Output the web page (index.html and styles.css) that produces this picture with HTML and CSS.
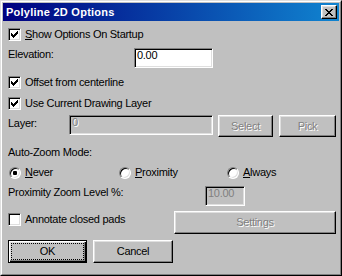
FILE: index.html
```html
<!DOCTYPE html>
<html>
<head>
<meta charset="utf-8">
<link rel="stylesheet" href="styles.css">
</head>
<body>
<div class="window">
  <div class="frame">
    <div class="titlebar">
      <span class="title">Polyline 2D Options</span>
      <span class="close">
        <svg width="8" height="7" viewBox="0 0 8 7" shape-rendering="crispEdges">
          <path d="M0 0h2v1h-2zM6 0h2v1h-2zM1 1h2v1h-2zM5 1h2v1h-2zM2 2h4v1h-4zM3 3h2v1h-2zM2 4h4v1h-4zM1 5h2v1h-2zM5 5h2v1h-2zM0 6h2v1h-2zM6 6h2v1h-2z" fill="#000"/>
        </svg>
      </span>
    </div>
    <div class="content">
      <div class="row row-check r-first">
        <span class="check"><svg width="7" height="7" viewBox="0 0 7 7" shape-rendering="crispEdges"><path d="M0 2H1V3H2V4H3V3H4V2H5V1H6V0H7V3H6V4H5V5H4V6H3V7H2V6H1V5H0Z" fill="#000"/></svg></span>
        <span class="lbl"><u>S</u>how Options On Startup</span>
      </div>
      <div class="row row-field r-elev">
        <span class="flabel w-elev">Elevation:</span>
        <span class="edit e-elev">0.00</span>
      </div>
      <div class="row row-check r-offset">
        <span class="check"><svg width="7" height="7" viewBox="0 0 7 7" shape-rendering="crispEdges"><path d="M0 2H1V3H2V4H3V3H4V2H5V1H6V0H7V3H6V4H5V5H4V6H3V7H2V6H1V5H0Z" fill="#000"/></svg></span>
        <span class="lbl">Offset from centerline</span>
      </div>
      <div class="row row-check r-layer-check">
        <span class="check"><svg width="7" height="7" viewBox="0 0 7 7" shape-rendering="crispEdges"><path d="M0 2H1V3H2V4H3V3H4V2H5V1H6V0H7V3H6V4H5V5H4V6H3V7H2V6H1V5H0Z" fill="#000"/></svg></span>
        <span class="lbl">Use Current Drawing Layer</span>
      </div>
      <div class="row row-field r-layer">
        <span class="flabel w-layer disabled-label">Layer:</span>
        <span class="edit edit-disabled e-layer"><span class="dis-text">0</span></span>
        <span class="btn b-select disabled">Select</span>
        <span class="btn b-pick disabled">Pick</span>
      </div>
      <div class="section-label">Auto-Zoom Mode:</div>
      <div class="row r-radios">
        <span class="ritem ri-never"><span class="radio"><span class="dot"></span></span><span class="rlbl"><u>N</u>ever</span></span>
        <span class="ritem ri-prox"><span class="radio"></span><span class="rlbl"><u>P</u>roximity</span></span>
        <span class="ritem ri-always"><span class="radio"></span><span class="rlbl"><u>A</u>lways</span></span>
      </div>
      <div class="row row-field r-prox">
        <span class="flabel w-prox">Proximity Zoom Level %:</span>
        <span class="edit edit-disabled e-prox"><span class="gray-text">10.00</span></span>
      </div>
      <div class="row r-annot">
        <span class="check"></span>
        <span class="lbl">Annotate closed pads</span>
        <span class="btn b-settings disabled">Settings</span>
      </div>
      <div class="row r-buttons">
        <span class="btn btn-default b-ok">OK</span>
        <span class="btn b-cancel">Cancel</span>
      </div>
    </div>
  </div>
</div>
</body>
</html>
```
FILE: styles.css
```css
body {
  margin: 0;
  font-family: "Liberation Sans", Arial, sans-serif;
  font-size: 11px;
  letter-spacing: -0.28px;
  color: #000;
  background: #c0c0c0;
}

.window {
  width: 342px;
  height: 276px;
  box-sizing: border-box;
  background: #c0c0c0;
  border: 1px solid;
  border-color: #dfdfdf #000 #000 #dfdfdf;
}

.frame {
  height: 100%;
  box-sizing: border-box;
  border: 1px solid;
  border-color: #fff #808080 #808080 #fff;
  padding: 1px;
}

.titlebar {
  height: 18px;
  display: flex;
  align-items: center;
  justify-content: space-between;
  padding: 0 2px 0 3px;
  background: linear-gradient(to right, #000080, #1084d0);
}

.title {
  color: #fff;
  font-weight: bold;
  letter-spacing: 0.25px;
  line-height: 18px;
}

.close {
  width: 16px;
  height: 14px;
  box-sizing: border-box;
  border: 1px solid;
  border-color: #fff #000 #000 #fff;
  box-shadow: inset -1px -1px #808080, inset 1px 1px #dfdfdf;
  background: #c0c0c0;
  display: flex;
  align-items: center;
  justify-content: center;
}

.close svg {
  display: block;
  margin: 0 0 0 0;
}

.content {
  display: flex;
  flex-direction: column;
  padding: 0 3px 0 5px;
}

.row {
  display: flex;
  align-items: center;
}

.row-check {
  height: 13px;
}

.r-first { margin-top: 7px; }
.r-elev { margin-top: 7px; height: 20px; align-items: flex-start; }
.r-offset { margin-top: 8px; }
.r-layer-check { margin-top: 8px; }
.r-layer { margin-top: 5px; height: 22px; align-items: flex-start; }
.r-radios { margin-top: 7px; height: 13px; }
.r-prox { margin-top: 7px; height: 20px; align-items: flex-start; }
.r-annot { margin-top: 5px; height: 23px; align-items: flex-start; }
.r-buttons { margin-top: 6px; height: 23px; }

.check {
  width: 13px;
  height: 13px;
  flex: none;
  box-sizing: border-box;
  border: 1px solid;
  border-color: #808080 #fff #fff #808080;
  box-shadow: inset 1px 1px #000, inset -1px -1px #dfdfdf;
  background: #fff;
  display: flex;
  align-items: center;
  justify-content: center;
}

.check svg { display: block; }

.lbl {
  margin-left: 4px;
  line-height: 13px;
  white-space: nowrap;
}

.flabel {
  line-height: 13px;
  white-space: nowrap;
  flex: none;
}

.w-elev { width: 126px; }
.w-layer { width: 61px; padding-top: 2px; color: #000; }
.w-prox { width: 197px; }

.edit {
  box-sizing: border-box;
  height: 20px;
  flex: none;
  border: 1px solid;
  border-color: #808080 #fff #fff #808080;
  box-shadow: inset 1px 1px #000, inset -1px -1px #dfdfdf;
  background: #fff;
  padding: 1px 0 0 2px;
  line-height: 11px;
  white-space: nowrap;
}

.edit-disabled {
  background: #c0c0c0;
}

.e-elev { width: 79px; }
.e-layer { width: 144px; }
.e-prox { width: 40px; }

.dis-text {
  color: #808080;
  text-shadow: 1px 1px 0 #fff;
}

.gray-text {
  color: #808080;
}

.btn {
  box-sizing: border-box;
  flex: none;
  border: 1px solid;
  border-color: #fff #000 #000 #fff;
  box-shadow: inset -1px -1px #808080, inset 1px 1px #dfdfdf;
  background: #c0c0c0;
  display: flex;
  align-items: center;
  justify-content: center;
  line-height: 13px;
  white-space: nowrap;
}

.disabled {
  color: #808080;
  text-shadow: 1px 1px 0 #fff;
}

.b-select { width: 55px; height: 22px; margin-left: 5px; }
.b-pick { width: 57px; height: 22px; margin-left: 6px; }
.b-settings { width: 162px; height: 23px; margin-left: auto; }

.b-ok { width: 79px; height: 23px; }
.b-cancel { width: 80px; height: 23px; margin-left: 6px; }

.btn-default {
  border: 1px solid #000;
  box-shadow: inset 1px 1px #fff, inset -1px -1px #000, inset -2px -2px #808080, inset 2px 2px #dfdfdf;
  outline: 1px dotted #000;
  outline-offset: -4px;
}

.r-annot .check { margin-top: 2px; }
.r-annot .lbl { margin-top: 2px; }

.section-label {
  margin-top: 9px;
  line-height: 13px;
}

.ritem {
  display: flex;
  align-items: center;
  flex: none;
}

.ri-never { width: 110px; margin-left: 1px; }
.ri-prox { width: 108px; }

.radio {
  width: 12px;
  height: 12px;
  flex: none;
  box-sizing: border-box;
  border-radius: 50%;
  border: 1px solid;
  border-color: #808080 #fff #fff #808080;
  box-shadow: inset 1px 1px #000, inset -1px -1px #dfdfdf;
  background: #fff;
  display: flex;
  align-items: center;
  justify-content: center;
}

.dot {
  width: 4px;
  height: 4px;
  border-radius: 1px;
  background: #000;
}

.rlbl {
  margin-left: 4px;
  line-height: 13px;
  white-space: nowrap;
}
```
